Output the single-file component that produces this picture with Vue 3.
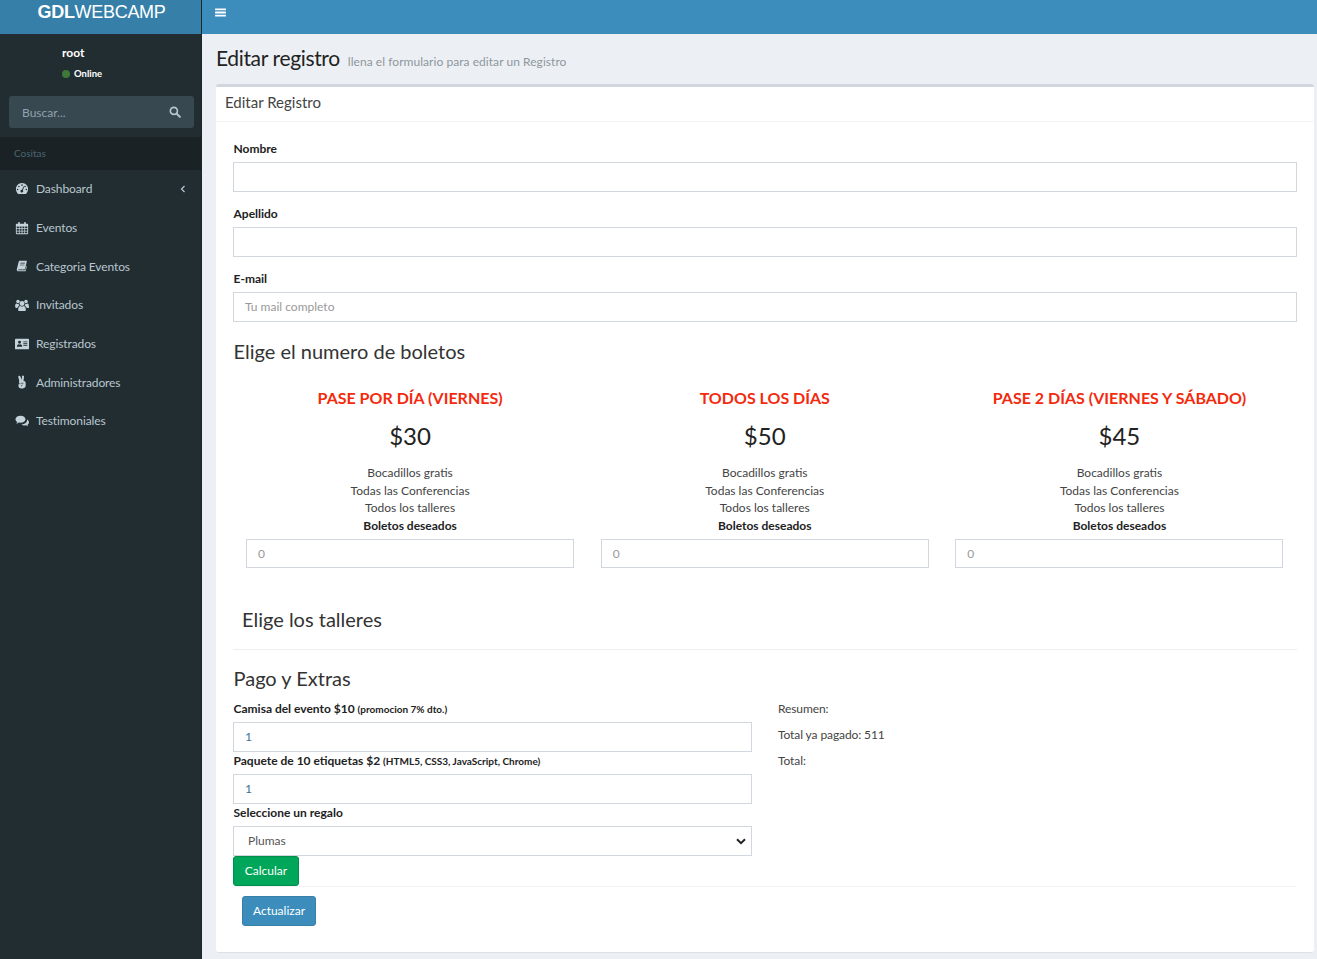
<script setup>
const menu = [
  { label: 'Dashboard', icon: 'gauge', arrow: true },
  { label: 'Eventos', icon: 'calendar' },
  { label: 'Categoria Eventos', icon: 'book' },
  { label: 'Invitados', icon: 'users' },
  { label: 'Registrados', icon: 'card' },
  { label: 'Administradores', icon: 'peace' },
  { label: 'Testimoniales', icon: 'comments' }
]
const plans = [
  { name: 'Pase por día (viernes)', price: '$30' },
  { name: 'Todos los días', price: '$50' },
  { name: 'Pase 2 días (viernes y sábado)', price: '$45' }
]
</script>

<template>
  <div class="app">
    <aside class="sidebar">
      <div class="logo"><b>GDL</b>WEBCAMP</div>
      <div class="user">
        <div class="uname">root</div>
        <div class="ustate"><span class="dot"></span>Online</div>
      </div>
      <div class="search">
        <span>Buscar...</span>
        <svg viewBox="0 0 16 16" width="12" height="12"><circle cx="6.5" cy="6.5" r="4.7" fill="none" stroke="#b8c7ce" stroke-width="2.2"/><path d="M10 10l4.5 4.5" stroke="#b8c7ce" stroke-width="2.6" stroke-linecap="round"/></svg>
      </div>
      <div class="menu-head">Cositas</div>
      <nav class="nav">
        <a v-for="m in menu" :key="m.label" class="item">
          <svg class="ico" viewBox="0 0 16 16">
            <g v-if="m.icon === 'gauge'">
              <path fill-rule="evenodd" d="M8 1a7 7 0 0 1 6.1 10.4c-.2.4-.6.9-1.1 1.6-.4.5-.8.8-1.4.8H4.4c-.6 0-1-.3-1.4-.8-.5-.7-.9-1.2-1.1-1.6A7 7 0 0 1 8 1zM8 2.7a.9.9 0 1 0 0 1.8.9.9 0 0 0 0-1.8zM4.5 4.2a.9.9 0 1 0 0 1.8.9.9 0 0 0 0-1.8zM3 7.6a.9.9 0 1 0 0 1.8.9.9 0 0 0 0-1.8zM13 7.6a.9.9 0 1 0 0 1.8.9.9 0 0 0 0-1.8zM11.5 4.2a.9.9 0 1 0 0 1.8.9.9 0 0 0 0-1.8zM9.6 5.4 7.8 9a1.5 1.5 0 1 0 1.1.5l1.6-3.7a.5.5 0 0 0-.9-.4z"/>
            </g>
            <g v-else-if="m.icon === 'calendar'">
              <path fill-rule="evenodd" d="M2 3h1.6V2a1 1 0 0 1 2 0v1h4.8V2a1 1 0 0 1 2 0v1H14a1 1 0 0 1 1 1v10a1 1 0 0 1-1 1H2a1 1 0 0 1-1-1V4a1 1 0 0 1 1-1zM2 6.2v2h2.4v-2zM5.3 6.2v2h2.2v-2zM8.5 6.2v2h2.2v-2zM11.6 6.2v2H14v-2zM2 9.1v2h2.4v-2zM5.3 9.1v2h2.2v-2zM8.5 9.1v2h2.2v-2zM11.6 9.1v2H14v-2zM2 12v2h2.4v-2zM5.3 12v2h2.2v-2zM8.5 12v2h2.2v-2zM11.6 12v2H14v-2z"/>
            </g>
            <g v-else-if="m.icon === 'book'" transform="translate(1.2 1.2) scale(.82)">
              <path fill-rule="evenodd" d="M5 1h9.3a.7.7 0 0 1 .7.9l-2.3 10.3a1.2 1.2 0 0 1-1.1.8H3.6c-.7 0-.9.5-.8.8.1.3.4.5.8.5H13l1.2-6 .8.4-1.4 6.2a1 1 0 0 1-.9.8H3.3C2 15.7 1 14.6 1 13.4c0-.3 0-.6.1-.9l2.7-10.6A1.3 1.3 0 0 1 5 1zM6.2 3.9l-.2 1h6.2l.2-1zM5.6 6.4l-.2 1h6.2l.2-1z"/>
            </g>
            <g v-else-if="m.icon === 'users'">
              <circle cx="8" cy="6.2" r="2.8"/>
              <circle cx="3.4" cy="4" r="2"/>
              <circle cx="12.6" cy="4" r="2"/>
              <path d="M3.6 13.6c0-3 1.2-4.4 2.6-4.4.5.4 1.1.6 1.8.6s1.3-.2 1.8-.6c1.4 0 2.6 1.4 2.6 4.4 0 .8-.6 1.2-1.3 1.2H4.9c-.7 0-1.3-.4-1.3-1.2z"/>
              <path d="M.2 9.2c0-1.6.4-2.9 1.4-2.9.4.3 1 .5 1.6.5.5 0 .7 0 1-.2 0 .8.3 1.6.9 2.2-1.2.3-2 1.2-2.5 2.6H1.2c-.6 0-1-.5-1-2.2zM15.8 9.2c0-1.6-.4-2.9-1.4-2.9-.4.3-1 .5-1.6.5-.5 0-.7 0-1-.2 0 .8-.3 1.6-.9 2.2 1.2.3 2 1.2 2.5 2.6h1.9c.6 0 1-.5 1-2.2z"/>
            </g>
            <g v-else-if="m.icon === 'card'">
              <path fill-rule="evenodd" d="M1 2h14a1 1 0 0 1 1 1v10a1 1 0 0 1-1 1H1a1 1 0 0 1-1-1V3a1 1 0 0 1 1-1zM5.2 4.4a1.7 1.7 0 1 0 0 3.4 1.7 1.7 0 0 0 0-3.4zM2.2 11.2h6c0-1.9-1-2.9-1.8-2.9-.4.2-.8.3-1.2.3s-.8-.1-1.2-.3c-.8 0-1.8 1-1.8 2.9zM9.5 5v1h4.6V5zM9.5 7.2v1h4.6v-1zM9.5 9.4v1h4.6v-1z"/>
            </g>
            <g v-else-if="m.icon === 'peace'">
              <path d="M4.7.8c.8-.2 1.3.3 1.5 1L7.6 5.6l.4-3.9C8.1 1 8.7.6 9.3.7c.7.1 1.1.7 1 1.4L9.7 7c1.4-.3 2.5.7 2.5 2.2v3.2c0 1.7-1.4 2.9-3.2 2.9H7.2c-1.9 0-3.3-1.2-3.3-3 0-.9.3-1.6.8-2.2L4.5 8c0-.4.2-.8.5-1L3.8 2.6c-.2-.8.1-1.6.9-1.8z"/>
              <path d="M5.6 9v1.6M7 9.4h2.6M6.8 12.8c.9-.4 1.4-1 1.5-1.8" fill="none" stroke="#222d32" stroke-width=".8"/>
            </g>
            <g v-else-if="m.icon === 'comments'">
              <path d="M6.3 2C3 2 .5 3.8.5 6c0 1.3.8 2.4 2.1 3.2-.2.7-.6 1.3-1.1 1.8 1.2-.1 2.2-.6 3-1.2.6.1 1.2.2 1.8.2 3.3 0 5.7-1.8 5.7-4S9.6 2 6.3 2z"/>
              <path d="M13.7 6.3c.1.2.1.5.1.7 0 2.7-2.8 4.6-6 4.6h-.5c.9.9 2.3 1.4 3.9 1.4.5 0 .9 0 1.4-.1.7.5 1.6.9 2.5 1-.4-.4-.8-1-.9-1.5 1.1-.7 1.8-1.7 1.8-2.9 0-1.2-.9-2.4-2.3-3.2z"/>
            </g>
          </svg>
          <span>{{ m.label }}</span>
          <svg v-if="m.arrow" class="arrow" viewBox="0 0 8 10" width="6" height="8"><path d="M6 1 2 5l4 4" fill="none" stroke="#b8c7ce" stroke-width="1.6"/></svg>
        </a>
      </nav>
    </aside>

    <div class="main">
      <header class="navbar">
        <svg viewBox="0 0 12 10" width="11" height="9"><path d="M0 .5h12v2H0zM0 4h12v2H0zM0 7.5h12v2H0z" fill="#fff"/></svg>
      </header>
      <section class="page">
        <div class="page-title">
          <h1>Editar registro</h1><small>llena el formulario para editar un Registro</small>
        </div>
        <div class="box">
          <div class="box-head">Editar Registro</div>
          <div class="box-body">
            <div class="fields">
              <div class="group"><label>Nombre</label><div class="field"></div></div>
              <div class="group"><label>Apellido</label><div class="field"></div></div>
              <div class="group"><label>E-mail</label><div class="field ph">Tu mail completo</div></div>
            </div>
            <h3 class="section first">Elige el numero de boletos</h3>
            <div class="plans">
              <div v-for="p in plans" :key="p.name" class="plan">
                <h3 class="plan-name">{{ p.name }}</h3>
                <div class="price">{{ p.price }}</div>
                <div class="plan-line l1">Bocadillos gratis</div>
                <div class="plan-line">Todas las Conferencias</div>
                <div class="plan-line">Todos los talleres</div>
                <div class="plan-line want">Boletos deseados</div>
                <div class="field ph small">0</div>
              </div>
            </div>
            <h3 class="section talleres">Elige los talleres</h3>
            <hr class="rule" />
            <h3 class="section pago">Pago y Extras</h3>
            <div class="extras">
              <div class="extras-left">
                <label class="lab">Camisa del evento $10 <small>(promocion 7% dto.)</small></label>
                <div class="field val">1</div>
                <label class="lab">Paquete de 10 etiquetas $2 <small>(HTML5, CSS3, JavaScript, Chrome)</small></label>
                <div class="field val">1</div>
                <label class="lab">Seleccione un regalo</label>
                <div class="field sel">
                  <span>Plumas</span>
                  <svg viewBox="0 0 10 7" width="10" height="7"><path d="M1 1.2 5 5.2l4-4" fill="none" stroke="#222" stroke-width="2"/></svg>
                </div>
                <button class="btn green">Calcular</button>
              </div>
              <div class="summary">
                <p>Resumen:</p>
                <p>Total ya pagado: 511</p>
                <p>Total:</p>
              </div>
            </div>
          </div>
          <div class="box-foot"><button class="btn blue">Actualizar</button></div>
        </div>
      </section>
    </div>
  </div>
</template>

<style>
html, body { margin: 0; height: 100%; overflow: hidden; }
</style>

<style scoped>
.app {
  display: flex;
  height: 959px;
  overflow: hidden;
  font-family: "Lato", "Noto Sans", sans-serif;
  font-size: 13px;
  color: #333;
}
.sidebar { width: 202px; flex: none; background: #222d32; color: #b8c7ce; border-right: 1px solid #1d262a; box-sizing: border-box; }
.logo { height: 34px; background: #367fa9; color: #fff; font-family: "Liberation Sans", sans-serif; font-size: 18px; text-align: center; line-height: 24px; letter-spacing: -.3px; padding-left: 2px; box-sizing: border-box; }
.logo b { font-weight: 700; }
.user { padding: 11px 0 0 62px; height: 62px; box-sizing: border-box; color: #fff; }
.uname { font-weight: 700; font-size: 12px; line-height: 15px; }
.ustate { display: flex; align-items: center; font-size: 9.5px; margin-top: 8px; font-weight: 700; line-height: 12px; }
.dot { width: 8px; height: 8px; border-radius: 50%; background: #3d7a3a; margin-right: 4px; }
.search { margin: 0 7px 9px 9px; height: 32px; background: #374850; border-radius: 3px; display: flex; align-items: center; justify-content: space-between; padding: 0 13px 0 13px; font-size: 12px; color: #8fa3ad; }
.menu-head { height: 33px; background: #1a2226; color: #4b646f; font-size: 10px; line-height: 33px; padding-left: 14px; }
.nav { margin-top: -.4px; }
.item { height: 38.67px; display: flex; align-items: center; padding-left: 15px; font-size: 12px; letter-spacing: -.1px; color: #b8c7ce; }
.ico { width: 14px; height: 14px; fill: #c4d2d9; margin-right: 7px; flex: none; }
.arrow { margin-left: auto; margin-right: 15px; }
.main { flex: 1; min-width: 0; background: #ecf0f5; }
.navbar { height: 34px; background: #3c8dbc; display: flex; align-items: flex-start; padding: 8px 0 0 13px; box-sizing: border-box; }
.page { padding: 0 3px 0 14px; }
.page-title { display: flex; align-items: baseline; height: 50px; padding-top: 10px; box-sizing: border-box; }
h1 { margin: 0; font-size: 21px; letter-spacing: -.35px; font-weight: 400; color: #222; line-height: 28px; }
.page-title small { font-size: 12px; letter-spacing: .05px; color: #8f969c; margin-left: 8px; }
.box { background: #fff; border-top: 3px solid #d2d6de; border-radius: 3px; height: 869px; box-sizing: border-box; border-bottom: 1px solid #dde0e5; }
.box-head { height: 35px; box-sizing: border-box; padding-left: 9px; line-height: 31px; font-size: 15px; color: #444; border-bottom: 1px solid #f4f4f4; }
.box-body { padding: 0 17px; }
.fields { padding-top: 19px; }
.group { margin-bottom: 7px; height: 58px; }
label { display: block; font-weight: 700; font-size: 12px; line-height: 16px; color: #222; padding-left: .5px; }
.group label { margin-bottom: 5px; }
.field { height: 30px; box-sizing: border-box; border: 1px solid #d2d6de; padding: 0 11px; line-height: 28px; font-size: 12px; background: #fff; }
.ph { color: #999; }
.section { margin: 0; font-weight: 400; font-size: 20px; color: #333; }
.first { margin-top: 2px; line-height: 30px; padding-left: .5px; }
.plans { display: grid; grid-template-columns: repeat(3, 1fr); margin-top: 22px; }
.plan { padding: 0 13.5px 0 13px; text-align: center; }
.plan-name { margin: 0; color: #f32a0e; font-size: 16px; font-weight: 700; text-transform: uppercase; line-height: 20px; }
.price { font-size: 24px; line-height: 30px; margin-top: 13px; color: #222; }
.plan-line { font-size: 12px; line-height: 17.5px; color: #444; }
.l1 { margin-top: 13px; }
.want { font-weight: 700; color: #222; margin-bottom: 5.4px; }
.small { height: 29px; text-align: left; line-height: 27px; }
.talleres { padding-left: 9px; margin-top: 37px; line-height: 28px; }
.rule { border: 0; border-top: 1px solid #eee; margin: 16px 0 0; }
.pago { margin-top: 14px; line-height: 28px; padding-left: .5px; }
.extras { display: grid; grid-template-columns: 519px 1fr; column-gap: 26px; margin-top: 9px; }
.lab { line-height: 16px; height: 21px; box-sizing: border-box; }
.lab small { font-size: 10px; }
.val { color: #3c6f99; margin-bottom: 1px; }
.sel { display: flex; align-items: center; justify-content: space-between; padding: 0 5px 0 14px; color: #555; }
.btn { display: block; height: 30px; border-radius: 3px; font: inherit; font-size: 12px; color: #fff; padding: 0 0 2px; }
.green { width: 66px; background: #00a65a; border: 1px solid #008d4c; }
.blue { width: 74px; background: #3c8dbc; border: 1px solid #367fa9; }
.summary { font-size: 12px; letter-spacing: -.1px; color: #444; }
.summary p { margin: 0 0 10px; line-height: 16px; }
.box-foot { margin: 0 18px 0 17px; border-top: 1px solid #f4f4f4; padding: 9px 0 0 9px; }
</style>
